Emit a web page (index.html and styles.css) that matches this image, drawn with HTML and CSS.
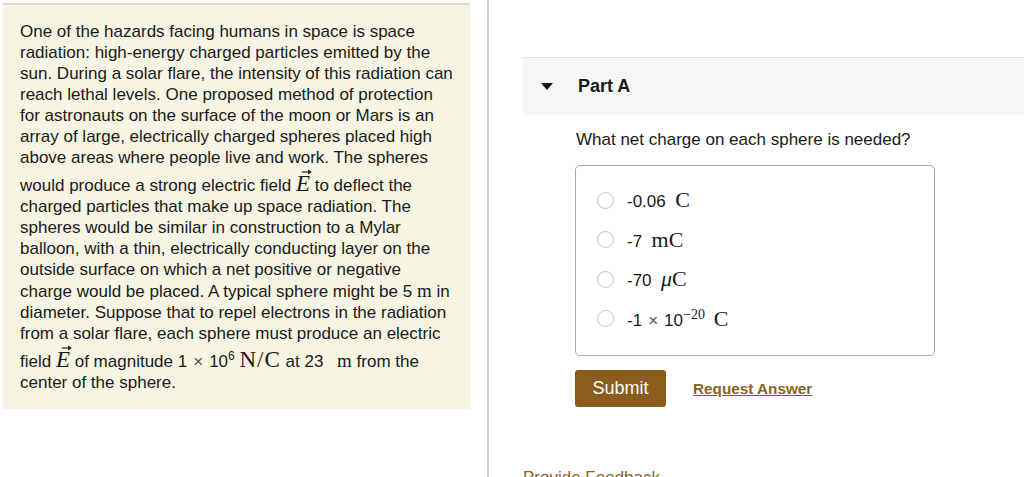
FILE: index.html
```html
<!DOCTYPE html>
<html>
<head>
<meta charset="utf-8">
<link rel="stylesheet" href="styles.css">
</head>
<body>
<div class="page">
  <div class="left">
    <div class="intro">
      One of the hazards facing humans in space is space<br>
      radiation: high-energy charged particles emitted by the<br>
      sun. During a solar flare, the intensity of this radiation can<br>
      reach lethal levels. One proposed method of protection<br>
      for astronauts on the surface of the moon or Mars is an<br>
      array of large, electrically charged spheres placed high<br>
      above areas where people live and work. The spheres<br>
      would produce a strong electric field <span class="vec"><svg class="arrow" width="10" height="6" viewBox="0 0 10 6"><path d="M0 3H8" stroke="#222" stroke-width="1.2"/><path d="M6 0.6L10 3L6 5.4Z" fill="#222"/></svg>E</span> to deflect the<br>
      charged particles that make up space radiation. The<br>
      spheres would be similar in construction to a Mylar<br>
      balloon, with a thin, electrically conducting layer on the<br>
      outside surface on which a net positive or negative<br>
      charge would be placed. A typical sphere might be 5 <span class="m">m</span> in<br>
      diameter. Suppose that to repel electrons in the radiation<br>
      from a solar flare, each sphere must produce an electric<br>
      field <span class="vec"><svg class="arrow" width="10" height="6" viewBox="0 0 10 6"><path d="M0 3H8" stroke="#222" stroke-width="1.2"/><path d="M6 0.6L10 3L6 5.4Z" fill="#222"/></svg>E</span> of magnitude 1<span class="times">×</span>10<sup>6</sup> <span class="m unit">N/C</span> at 23 <span class="m gap">m</span> from the<br>
      center of the sphere.
    </div>
  </div>
  <div class="divider"></div>
  <div class="right">
    <div class="part-head">
      <span class="caret"></span>
      <span class="part-title">Part A</span>
    </div>
    <div class="part-body">
      <p class="question">What net charge on each sphere is needed?</p>
      <div class="options">
        <label class="opt"><span class="radio"></span><span>-0.06 &nbsp;<span class="m big">C</span></span></label>
        <label class="opt"><span class="radio"></span><span>-7 &nbsp;<span class="m big">mC</span></span></label>
        <label class="opt"><span class="radio"></span><span>-70 &nbsp;<span class="m big"><i>μ</i>C</span></span></label>
        <label class="opt"><span class="radio"></span><span>-1<span class="times">×</span>10<sup class="ms">−20</sup> <span class="m big cgap">C</span></span></label>
      </div>
      <div class="actions">
        <button class="submit">Submit</button>
        <a class="request">Request Answer</a>
      </div>
      <div class="feedback">Provide Feedback</div>
    </div>
  </div>
</div>
</body>
</html>
```

FILE: styles.css
```css
html, body {
  margin: 0;
  padding: 0;
  background: #fff;
  height: 477px;
  overflow: hidden;
}
body {
  font-family: "Liberation Sans", Arial, sans-serif;
  color: #1a1a1a;
}
.page {
  display: flex;
  height: 477px;
}
.left {
  width: 487px;
  flex: none;
  padding: 3px 0 0 3px;
  box-sizing: border-box;
}
.intro {
  width: 467px;
  box-sizing: border-box;
  background: #f6f5e4;
  border-top: 2px solid #dcdcd6;
  padding: 16px 0 16px 17px;
  font-size: 17px;
  line-height: 21px;
  white-space: nowrap;
}
.vec {
  font-family: "Liberation Serif", "Times New Roman", serif;
  font-style: italic;
  font-size: 23px;
  position: relative;
  display: inline-block;
  line-height: 21px;
  padding-top: 5px;
}
.arrow {
  position: absolute;
  left: 6px;
  top: 1px;
}
.m {
  font-family: "Liberation Serif", "Times New Roman", serif;
  font-size: 19px;
}
.m.unit {
  font-size: 23px;
  letter-spacing: 1px;
}
.m.gap {
  margin-left: 9px;
}
.m.big {
  font-size: 22px;
}
.m.cgap {
  margin-left: 4px;
}
.times {
  color: #555;
  margin: 0 6px;
}
sup {
  font-size: 12px;
  line-height: 0;
  vertical-align: 7px;
}
sup.ms {
  font-family: "Liberation Serif", "Times New Roman", serif;
  font-size: 14px;
}
.divider {
  width: 2px;
  flex: none;
  background: #dcd0d0;
}
.right {
  flex: 1;
  padding-top: 57px;
  padding-left: 33px;
}
.part-head {
  height: 58px;
  box-sizing: border-box;
  border-top: 1px solid #e2e2e2;
  background: #f7f7f7;
  display: flex;
  align-items: center;
  padding-left: 19px;
}
.caret {
  width: 0;
  height: 0;
  border-left: 6px solid transparent;
  border-right: 6px solid transparent;
  border-top: 7px solid #1a1a1a;
  margin-right: 25px;
}
.part-title {
  font-weight: bold;
  font-size: 18px;
}
.part-body {
  padding-left: 53px;
}
.question {
  margin: 14px 0 0 1px;
  font-size: 17px;
  line-height: 22px;
}
.options {
  margin-top: 14px;
  width: 360px;
  height: 191px;
  box-sizing: border-box;
  border: 1px solid #a8a8a8;
  border-radius: 5px;
  padding: 22px 0 0 21px;
  display: flex;
  flex-direction: column;
  gap: 15.6px;
}
.opt {
  display: flex;
  align-items: center;
  height: 24px;
  font-size: 17px;
}
.radio {
  width: 17px;
  height: 17px;
  border: 1px solid #c4c4c4;
  border-radius: 50%;
  box-sizing: border-box;
  margin-right: 13px;
  background: #fff;
}
.actions {
  margin-top: 14px;
  display: flex;
  align-items: center;
  gap: 27px;
}
.submit {
  width: 91px;
  height: 37px;
  background: #8a5d1f;
  color: #fff;
  border: none;
  border-radius: 3px;
  font-family: "Liberation Sans", Arial, sans-serif;
  font-size: 18px;
  padding: 0;
}
.request {
  color: #8a6320;
  font-weight: bold;
  font-size: 15.3px;
  text-decoration: underline;
}
.feedback {
  margin-top: 61px;
  margin-left: -52px;
  color: #8a6320;
  font-size: 17px;
}
```
